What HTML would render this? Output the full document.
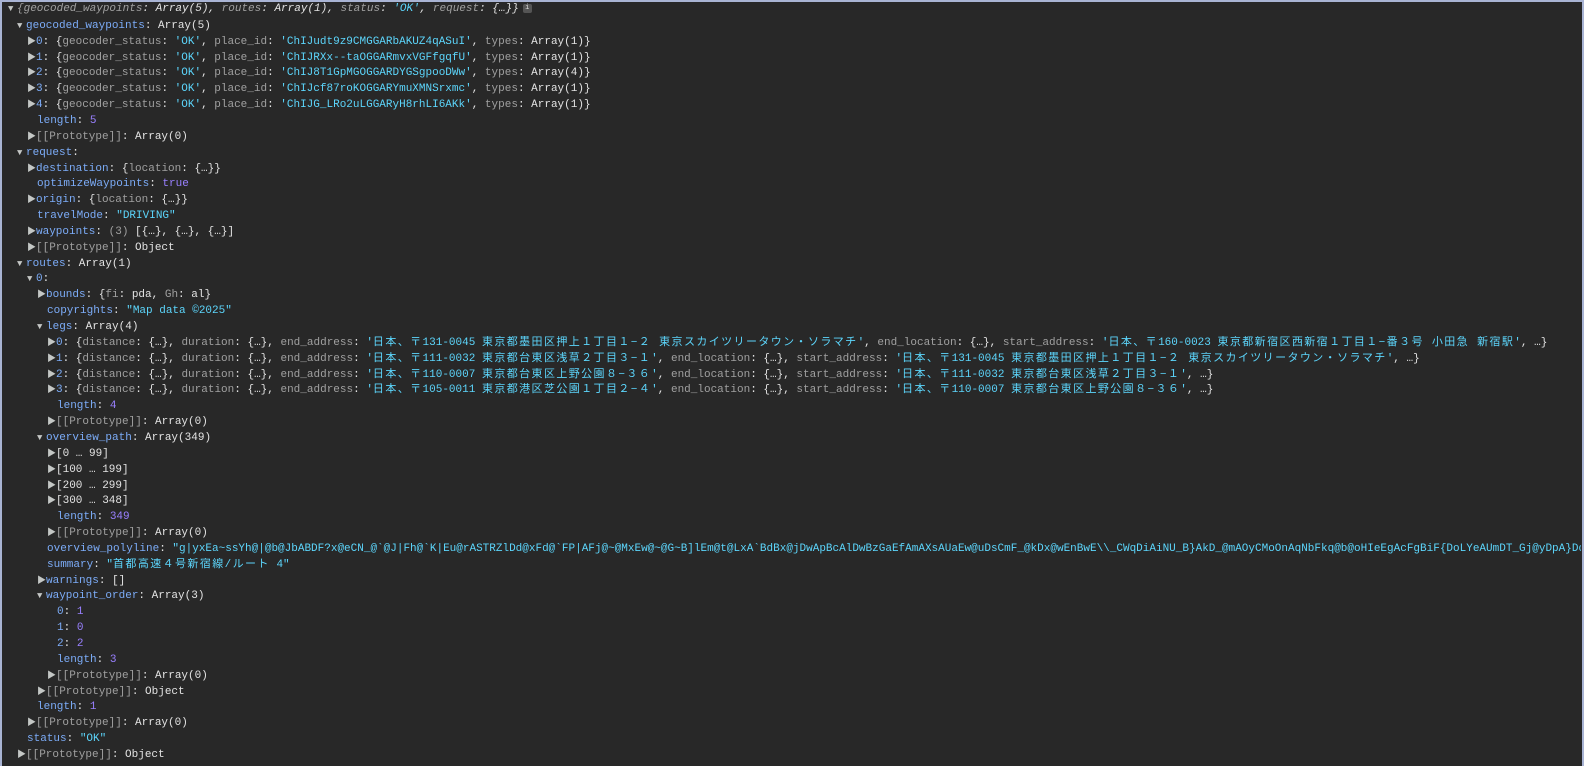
<!DOCTYPE html>
<html><head><meta charset="utf-8"><style>
html,body{margin:0;padding:0;background:#282828;width:1584px;height:766px;overflow:hidden}
#f{position:absolute;left:0;top:0;width:1584px;height:766px;border-left:2px solid #a9b4d4;border-top:2px solid #a9b4d4;border-right:2px solid #a9b4d4;box-sizing:border-box}
.l{position:absolute;left:0;right:3px;white-space:nowrap;font-family:"Liberation Mono","Noto Sans CJK JP",monospace;font-size:11px;color:#e3e3e3;line-height:15px;height:15px;overflow:hidden;margin-top:1px}
.t{display:inline-block;width:9px;margin-left:-10px;color:#c4c7c5;font-size:9px;letter-spacing:0}
.k{color:#7cacf8}
.g{color:#a0a0a0}
.s{color:#5cd5fb}
.n{color:#9980ff}
.p{color:#a0a0a0}
.j{letter-spacing:1.4px}
.i{font-style:italic}
.b{display:inline-block;width:9px;height:9px;background:#555;color:#ddd;font-size:7px;line-height:9px;text-align:center;border-radius:2px;font-style:normal;vertical-align:middle;margin-left:4px}
</style></head><body><div id="f"></div>
<div class="l i" style="top:1px;padding-left:18px"><span class="t">▼</span><span class="g">{geocoded_waypoints</span>: Array(5), <span class="g">routes</span>: Array(1), <span class="g">status</span>: <span class="s">'OK'</span>, <span class="g">request</span>: {…}}<span class="b">i</span></div>
<div class="l" style="top:17.85px;padding-left:27px"><span class="t">▼</span><span class="k">geocoded_waypoints</span>: Array(5)</div>
<div class="l" style="top:33.7px;padding-left:37px"><span class="t">▶</span><span class="k">0</span>: {<span class="g">geocoder_status</span>: <span class="s">'OK'</span>, <span class="g">place_id</span>: <span class="s">'ChIJudt9z9CMGGARbAKUZ4qASuI'</span>, <span class="g">types</span>: Array(1)}</div>
<div class="l" style="top:49.55px;padding-left:37px"><span class="t">▶</span><span class="k">1</span>: {<span class="g">geocoder_status</span>: <span class="s">'OK'</span>, <span class="g">place_id</span>: <span class="s">'ChIJRXx--taOGGARmvxVGFfgqfU'</span>, <span class="g">types</span>: Array(1)}</div>
<div class="l" style="top:65.4px;padding-left:37px"><span class="t">▶</span><span class="k">2</span>: {<span class="g">geocoder_status</span>: <span class="s">'OK'</span>, <span class="g">place_id</span>: <span class="s">'ChIJ8T1GpMGOGGARDYGSgpooDWw'</span>, <span class="g">types</span>: Array(4)}</div>
<div class="l" style="top:81.25px;padding-left:37px"><span class="t">▶</span><span class="k">3</span>: {<span class="g">geocoder_status</span>: <span class="s">'OK'</span>, <span class="g">place_id</span>: <span class="s">'ChIJcf87roKOGGARYmuXMNSrxmc'</span>, <span class="g">types</span>: Array(1)}</div>
<div class="l" style="top:97.1px;padding-left:37px"><span class="t">▶</span><span class="k">4</span>: {<span class="g">geocoder_status</span>: <span class="s">'OK'</span>, <span class="g">place_id</span>: <span class="s">'ChIJG_LRo2uLGGARyH8rhLI6AKk'</span>, <span class="g">types</span>: Array(1)}</div>
<div class="l" style="top:112.95px;padding-left:37px"><span class="k">length</span>: <span class="n">5</span></div>
<div class="l" style="top:128.8px;padding-left:37px"><span class="t">▶</span><span class="p">[[Prototype]]</span>: Array(0)</div>
<div class="l" style="top:144.65px;padding-left:27px"><span class="t">▼</span><span class="k">request</span>:</div>
<div class="l" style="top:160.5px;padding-left:37px"><span class="t">▶</span><span class="k">destination</span>: {<span class="g">location</span>: {…}}</div>
<div class="l" style="top:176.35px;padding-left:37px"><span class="k">optimizeWaypoints</span>: <span class="n">true</span></div>
<div class="l" style="top:192.2px;padding-left:37px"><span class="t">▶</span><span class="k">origin</span>: {<span class="g">location</span>: {…}}</div>
<div class="l" style="top:208.05px;padding-left:37px"><span class="k">travelMode</span>: <span class="s">"DRIVING"</span></div>
<div class="l" style="top:223.9px;padding-left:37px"><span class="t">▶</span><span class="k">waypoints</span>: <span class="g">(3)</span> [{…}, {…}, {…}]</div>
<div class="l" style="top:239.75px;padding-left:37px"><span class="t">▶</span><span class="p">[[Prototype]]</span>: Object</div>
<div class="l" style="top:255.6px;padding-left:27px"><span class="t">▼</span><span class="k">routes</span>: Array(1)</div>
<div class="l" style="top:271.45px;padding-left:37px"><span class="t">▼</span><span class="k">0</span>:</div>
<div class="l" style="top:287.3px;padding-left:47px"><span class="t">▶</span><span class="k">bounds</span>: {<span class="g">fi</span>: pda, <span class="g">Gh</span>: al}</div>
<div class="l" style="top:303.15px;padding-left:47px"><span class="k">copyrights</span>: <span class="s">"Map data ©2025"</span></div>
<div class="l" style="top:319px;padding-left:47px"><span class="t">▼</span><span class="k">legs</span>: Array(4)</div>
<div class="l" style="top:334.85px;padding-left:57px"><span class="t">▶</span><span class="k">0</span>: {<span class="g">distance</span>: {…}, <span class="g">duration</span>: {…}, <span class="g">end_address</span>: <span class="s">'<span class="j">日本、〒</span>131-0045 <span class="j">東京都墨田区押上１丁目１−２ 東京スカイツリータウン・ソラマチ</span>'</span>, <span class="g">end_location</span>: {…}, <span class="g">start_address</span>: <span class="s">'<span class="j">日本、〒</span>160-0023 <span class="j">東京都新宿区西新宿１丁目１−番３号 小田急 新宿駅</span>'</span>, …}</div>
<div class="l" style="top:350.7px;padding-left:57px"><span class="t">▶</span><span class="k">1</span>: {<span class="g">distance</span>: {…}, <span class="g">duration</span>: {…}, <span class="g">end_address</span>: <span class="s">'<span class="j">日本、〒</span>111-0032 <span class="j">東京都台東区浅草２丁目３−１</span>'</span>, <span class="g">end_location</span>: {…}, <span class="g">start_address</span>: <span class="s">'<span class="j">日本、〒</span>131-0045 <span class="j">東京都墨田区押上１丁目１−２ 東京スカイツリータウン・ソラマチ</span>'</span>, …}</div>
<div class="l" style="top:366.55px;padding-left:57px"><span class="t">▶</span><span class="k">2</span>: {<span class="g">distance</span>: {…}, <span class="g">duration</span>: {…}, <span class="g">end_address</span>: <span class="s">'<span class="j">日本、〒</span>110-0007 <span class="j">東京都台東区上野公園８−３６</span>'</span>, <span class="g">end_location</span>: {…}, <span class="g">start_address</span>: <span class="s">'<span class="j">日本、〒</span>111-0032 <span class="j">東京都台東区浅草２丁目３−１</span>'</span>, …}</div>
<div class="l" style="top:382.4px;padding-left:57px"><span class="t">▶</span><span class="k">3</span>: {<span class="g">distance</span>: {…}, <span class="g">duration</span>: {…}, <span class="g">end_address</span>: <span class="s">'<span class="j">日本、〒</span>105-0011 <span class="j">東京都港区芝公園１丁目２−４</span>'</span>, <span class="g">end_location</span>: {…}, <span class="g">start_address</span>: <span class="s">'<span class="j">日本、〒</span>110-0007 <span class="j">東京都台東区上野公園８−３６</span>'</span>, …}</div>
<div class="l" style="top:398.25px;padding-left:57px"><span class="k">length</span>: <span class="n">4</span></div>
<div class="l" style="top:414.1px;padding-left:57px"><span class="t">▶</span><span class="p">[[Prototype]]</span>: Array(0)</div>
<div class="l" style="top:429.95px;padding-left:47px"><span class="t">▼</span><span class="k">overview_path</span>: Array(349)</div>
<div class="l" style="top:445.8px;padding-left:57px"><span class="t">▶</span>[0 … 99]</div>
<div class="l" style="top:461.65px;padding-left:57px"><span class="t">▶</span>[100 … 199]</div>
<div class="l" style="top:477.5px;padding-left:57px"><span class="t">▶</span>[200 … 299]</div>
<div class="l" style="top:493.35px;padding-left:57px"><span class="t">▶</span>[300 … 348]</div>
<div class="l" style="top:509.2px;padding-left:57px"><span class="k">length</span>: <span class="n">349</span></div>
<div class="l" style="top:525.05px;padding-left:57px"><span class="t">▶</span><span class="p">[[Prototype]]</span>: Array(0)</div>
<div class="l" style="top:540.9px;padding-left:47px"><span class="k">overview_polyline</span>: <span class="s">"g|yxEa~ssYh@|@b@JbABDF?x@eCN_@`@J|Fh@`K|Eu@rASTRZlDd@xFd@`FP|AFj@~@MxEw@~@G~B]lEm@t@LxA`BdBx@jDwApBcAlDwBzGaEfAmAXsAUaEw@uDsCmF_@kDx@wEnBwE\\_CWqDiAiNU_B}AkD_@mAOyCMoOnAqNbFkq@b@oHIeEgAcFgBiF{DoLYeAUmDT_Gj@yDpA}DoLYeAUm</span></div>
<div class="l" style="top:556.75px;padding-left:47px"><span class="k">summary</span>: <span class="s">"<span class="j">首都高速４号新宿線/ルート</span> 4"</span></div>
<div class="l" style="top:572.6px;padding-left:47px"><span class="t">▶</span><span class="k">warnings</span>: []</div>
<div class="l" style="top:588.45px;padding-left:47px"><span class="t">▼</span><span class="k">waypoint_order</span>: Array(3)</div>
<div class="l" style="top:604.3px;padding-left:57px"><span class="k">0</span>: <span class="n">1</span></div>
<div class="l" style="top:620.15px;padding-left:57px"><span class="k">1</span>: <span class="n">0</span></div>
<div class="l" style="top:636px;padding-left:57px"><span class="k">2</span>: <span class="n">2</span></div>
<div class="l" style="top:651.85px;padding-left:57px"><span class="k">length</span>: <span class="n">3</span></div>
<div class="l" style="top:667.7px;padding-left:57px"><span class="t">▶</span><span class="p">[[Prototype]]</span>: Array(0)</div>
<div class="l" style="top:683.55px;padding-left:47px"><span class="t">▶</span><span class="p">[[Prototype]]</span>: Object</div>
<div class="l" style="top:699.4px;padding-left:37px"><span class="k">length</span>: <span class="n">1</span></div>
<div class="l" style="top:715.25px;padding-left:37px"><span class="t">▶</span><span class="p">[[Prototype]]</span>: Array(0)</div>
<div class="l" style="top:731.1px;padding-left:27px"><span class="k">status</span>: <span class="s">"OK"</span></div>
<div class="l" style="top:746.95px;padding-left:27px"><span class="t">▶</span><span class="p">[[Prototype]]</span>: Object</div>
</body></html>
